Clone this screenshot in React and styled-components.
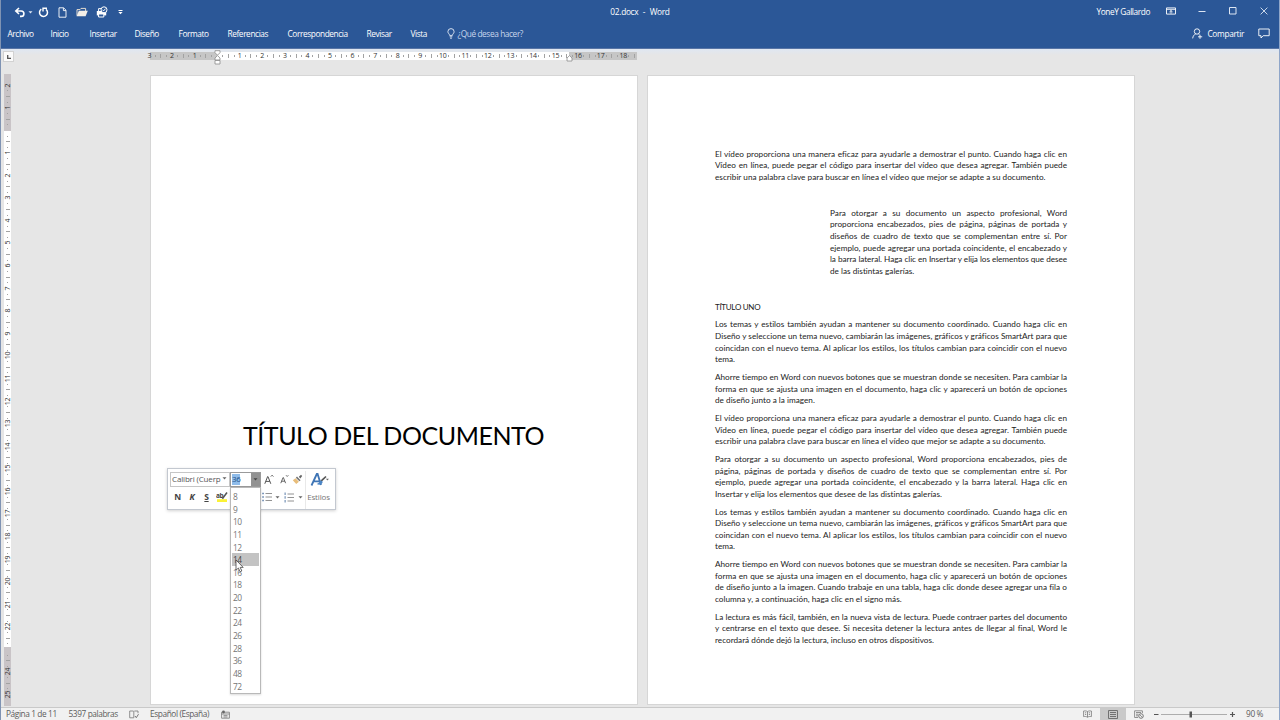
import React from "react";
import styled, { createGlobalStyle, css } from "styled-components";

const GlobalStyle = createGlobalStyle`
  * {
    box-sizing: border-box;
  }
  body {
    margin: 0;
    overflow: hidden;
    background: #e6e6e6;
    font-family: "Open Sans", "Noto Sans", sans-serif;
  }
`;

const Window = styled.div`
  width: 1280px;
  height: 720px;
  display: flex;
  flex-direction: column;
  overflow: hidden;
  border-left: 1px solid #7f93b3;
  border-right: 1px solid #8fa6c9;
  background: #e6e6e6;
  font-size: 8.3px;
  letter-spacing: -0.4px;
`;

/* ---------- header ---------- */

const Header = styled.header`
  height: 49px;
  flex: none;
  display: flex;
  flex-direction: column;
  background: #2b5797;
  border-bottom: 1px solid #5875a6;
  margin: 0 -1px;
  color: #fff;
  font-weight: 500;
`;

const TitleBar = styled.div`
  height: 23px;
  display: grid;
  grid-template-columns: 1fr 70px 1fr;
  align-items: center;
`;

const QuickAccess = styled.div`
  display: flex;
  align-items: center;
  padding: 1px 0 0 14px;
`;

const QuickButton = styled.span`
  width: ${(p) => p.$w}px;
  height: 16px;
  display: flex;
  align-items: center;
  justify-content: center;
`;

const DocTitle = styled.div`
  text-align: center;
  white-space: pre;
  letter-spacing: -0.3px;
  word-spacing: 0.4px;
  line-height: 12px;
`;

const WindowControls = styled.div`
  display: flex;
  align-items: center;
  justify-content: flex-end;
  padding: 0 1px 1px 0;
`;

const UserName = styled.span`
  margin-right: 5px;
`;

const ControlButton = styled.span`
  width: 31px;
  height: 16px;
  display: flex;
  align-items: center;
  justify-content: center;
`;

const MenuBar = styled.nav`
  height: 21px;
  display: flex;
  align-items: center;
  padding: 0 10px 0 7.5px;
`;

const MenuItem = styled.span`
  width: ${(p) => p.$w}px;
  white-space: nowrap;
`;

const TellMe = styled.span`
  display: flex;
  align-items: center;
  gap: 3px;
  color: #c8d6ec;
  font-weight: 400;
`;

const MenuRight = styled.div`
  margin-left: auto;
  display: flex;
  align-items: center;
  gap: 14px;
`;

const ShareButton = styled.span`
  display: flex;
  align-items: center;
  gap: 4px;
  letter-spacing: -0.32px;
`;

/* ---------- rulers ---------- */

const RulerRow = styled.div`
  height: 15px;
  flex: none;
  display: flex;
  align-items: flex-start;
  background: linear-gradient(#dfe7f2, #e6e6e6 6px);
  padding: 2px 0 0 2px;
`;

const TabStop = styled.div`
  width: 11px;
  height: 11px;
  display: flex;
  align-items: center;
  justify-content: center;
  background: #fbfbfb;
  border: 1px solid #d2d2d2;
`;

const HorizontalRuler = styled.div`
  position: relative;
  width: 491px;
  height: 8px;
  margin: 1px 0 0 132.6px;
  display: flex;
  align-items: center;
  background: linear-gradient(
    90deg,
    transparent 3px,
    #c6c6c6 3px 70.5px,
    #fff 70.5px 422.5px,
    #c6c6c6 422.5px 490px,
    transparent 490px
  );
`;

const HStep = styled.span`
  flex: 1 1 0;
  min-width: 0;
  display: flex;
  justify-content: center;
  color: #333;
  font-size: 7px;
  line-height: 8px;
  letter-spacing: -0.2px;
`;

const VerticalRuler = styled.div`
  width: 7px;
  margin-left: 3px;
  height: 632px;
  display: flex;
  flex-direction: column;
  padding-top: 8.5px;
  background: linear-gradient(#c9c4c7 57px, #fff 57px 573px, #c9c4c7 573px);
`;

const VStep = styled.span`
  height: 5.643px;
  flex: none;
  display: flex;
  align-items: center;
  justify-content: center;
  color: #333;
  font-size: 7px;
  line-height: 7px;
`;

const VNumber = styled.span`
  writing-mode: vertical-rl;
  transform: rotate(180deg);
`;

const Tick = styled.i`
  background: #a2a2a2;
  ${(p) =>
    p.$vertical
      ? css`
          width: ${p.$long ? 4 : 1}px;
          height: 1px;
        `
      : css`
          width: 1px;
          height: ${p.$long ? 4 : 2}px;
        `}
`;

/* indent markers sit on top of the ruler scale */
const IndentMarker = styled.svg`
  position: absolute;
  top: ${(p) => p.$top}px;
  left: ${(p) => p.$left}px;
`;

/* ---------- pages ---------- */

const Workspace = styled.main`
  flex: 1;
  min-height: 0;
  display: flex;
  align-items: flex-start;
  padding-top: 10px;
`;

const Pages = styled.div`
  display: flex;
  gap: 9px;
  padding: 1px 0 0 139px;
`;

const Page = styled.section`
  position: relative;
  width: 488px;
  height: 630px;
  background: #fff;
  border: 1px solid #d6d6d6;
  color: #1c1c1c;
  font-family: Lato, "Open Sans", sans-serif;
`;

const CoverTitle = styled.h1`
  margin: 0;
  padding: 342px 0 0 92px;
  font-size: 25px;
  line-height: 34px;
  font-weight: 400;
  letter-spacing: -0.45px;
  color: #000;
  white-space: nowrap;
`;

const TextBody = styled.div`
  padding: 72.6px 67px 0 67px;
  font-size: 8.2px;
  line-height: 11.63px;
  letter-spacing: 0.014px;
`;

const Paragraph = styled.p`
  margin: 0 0 ${(p) => p.$after || 6.1}px;
  padding-left: ${(p) => p.$indent || 0}px;
`;

const Line = styled.span`
  display: block;
  height: 11.63px;
  white-space: nowrap;
  text-align: left;
  text-align-last: ${(p) => (p.$last ? "left" : "justify")};
  letter-spacing: ${(p) => (p.$tight ? "-0.06px" : "inherit")};
`;

const Heading = styled.h2`
  margin: 0 0 6.3px;
  font-size: 8px;
  line-height: 11.63px;
  font-weight: 400;
  letter-spacing: -0.3px;
`;

/* ---------- floating toolbar ---------- */

const MiniToolbar = styled.div`
  position: absolute;
  left: 16px;
  top: 392px;
  width: 169px;
  height: 42px;
  padding: 2px 4px 0 2px;
  display: flex;
  background: #fff;
  border: 1px solid #c3c8d0;
  box-shadow: 0 1px 3px rgba(0, 0, 0, 0.18);
  font-family: "Open Sans", "Noto Sans", sans-serif;
  font-size: 8px;
  color: #555;
`;

const ToolRows = styled.div`
  width: 134px;
  display: flex;
  flex-direction: column;
  gap: 2px;
`;

const ToolRow = styled.div`
  height: 16px;
  display: flex;
  align-items: center;
`;

const FontBox = styled.div`
  width: 60px;
  height: 15px;
  flex: none;
  display: flex;
  align-items: center;
  justify-content: space-between;
  padding: 0 2px 1px 1px;
  border: 1px solid #c6c6c6;
  line-height: 11px;
  white-space: nowrap;
  letter-spacing: -0.16px;
`;

const SizeBox = styled.div`
  width: 31px;
  height: 15px;
  flex: none;
  display: flex;
  align-items: center;
  border: 1px solid #9a9a9a;
  padding-left: 1px;
`;

const SizeValue = styled.span`
  height: 11px;
  line-height: 10px;
  background: #8fbcea;
  color: #1d4f86;
`;

const SizeArrow = styled.span`
  width: 9px;
  height: 100%;
  margin-left: auto;
  display: flex;
  align-items: center;
  justify-content: center;
  background: #929292;
`;

const ToolButton = styled.span`
  width: ${(p) => p.$w || 15}px;
  height: 16px;
  flex: none;
  display: flex;
  align-items: center;
  justify-content: center;
  color: #444;
  font-size: 8.5px;
  line-height: 12px;
  font-weight: ${(p) => (p.$bold ? 700 : 400)};
  font-style: ${(p) => (p.$italic ? "italic" : "normal")};
  text-decoration: ${(p) => (p.$underline ? "underline" : "none")};
`;

const HiddenTools = styled.span`
  width: 30px;
  flex: none;
`;

const StylesButton = styled.div`
  flex: 1;
  display: flex;
  flex-direction: column;
  align-items: center;
  gap: 2px;
  margin-left: 1px;
  border-left: 1px solid #e9e9e9;
  line-height: 12px;
  letter-spacing: -0.15px;
  color: #777;
`;

const SizeMenu = styled.ul`
  position: absolute;
  left: 79px;
  top: 411px;
  width: 31px;
  height: 207px;
  margin: 0;
  padding: 2px 1px;
  list-style: none;
  background: #fff;
  border: 1px solid #b9b9b9;
  box-shadow: 0 1px 2px rgba(0, 0, 0, 0.15);
  font-family: "Open Sans", "Noto Sans", sans-serif;
`;

const SizeOption = styled.li`
  height: 12.65px;
  padding-left: 1px;
  font-size: 8.4px;
  line-height: 13px;
  letter-spacing: -0.45px;
  color: ${(p) => (p.$active ? "#444" : "#757575")};
  background: ${(p) => (p.$active ? "#c3c3c3" : "transparent")};
`;

const Pointer = styled.svg`
  position: absolute;
  left: 84px;
  top: 483px;
`;

/* ---------- status bar ---------- */

const StatusBar = styled.footer`
  height: 13px;
  flex: none;
  display: flex;
  align-items: center;
  padding: 0 16px 0 5px;
  background: #f1f1f1;
  border-top: 1px solid #c9c9c9;
  color: #5c5c5c;
  line-height: 12px;
`;

const StatusItem = styled.span`
  width: ${(p) => p.$w}px;
  flex: none;
  display: flex;
  align-items: center;
  white-space: nowrap;
`;

const ViewButton = styled.span`
  width: 26px;
  height: 12px;
  display: flex;
  align-items: center;
  justify-content: center;
  background: ${(p) => (p.$active ? "#c9c9c9" : "transparent")};
`;

const StatusRight = styled.div`
  margin-left: auto;
  display: flex;
  align-items: center;
`;

const Zoom = styled.div`
  width: 82px;
  margin: 0 10px 0 2px;
  display: flex;
  align-items: center;
`;

const MENU = [
  ["Archivo", 43],
  ["Inicio", 39],
  ["Insertar", 45],
  ["Diseño", 44],
  ["Formato", 49],
  ["Referencias", 60],
  ["Correspondencia", 79],
  ["Revisar", 44],
  ["Vista", 36],
];

const SIZES = [8, 9, 10, 11, 12, 14, 16, 18, 20, 22, 24, 26, 28, 36, 48, 72];

const VIDEO = [
  "El vídeo proporciona una manera eficaz para ayudarle a demostrar el punto. Cuando haga clic en",
  "Vídeo en línea, puede pegar el código para insertar del vídeo que desea agregar. También puede",
  "escribir una palabra clave para buscar en línea el vídeo que mejor se adapte a su documento.",
];

const TEMAS = [
  "Los temas y estilos también ayudan a mantener su documento coordinado. Cuando haga clic en",
  "Diseño y seleccione un tema nuevo, cambiarán las imágenes, gráficos y gráficos SmartArt para que",
  "coincidan con el nuevo tema. Al aplicar los estilos, los títulos cambian para coincidir con el nuevo",
  "tema.",
];

const BLOCKS = [
  { lines: VIDEO, after: 24.4 },
  {
    indent: 115,
    after: 23.9,
    tight: 4,
    lines: [
      "Para otorgar a su documento un aspecto profesional, Word",
      "proporciona encabezados, pies de página, páginas de portada y",
      "diseños de cuadro de texto que se complementan entre sí. Por",
      "ejemplo, puede agregar una portada coincidente, el encabezado y",
      "la barra lateral. Haga clic en Insertar y elija los elementos que desee",
      "de las distintas galerías.",
    ],
  },
  { heading: "TÍTULO UNO" },
  { lines: TEMAS },
  {
    lines: [
      "Ahorre tiempo en Word con nuevos botones que se muestran donde se necesiten. Para cambiar la",
      "forma en que se ajusta una imagen en el documento, haga clic y aparecerá un botón de opciones",
      "de diseño junto a la imagen.",
    ],
  },
  { lines: VIDEO },
  {
    lines: [
      "Para otorgar a su documento un aspecto profesional, Word proporciona encabezados, pies de",
      "página, páginas de portada y diseños de cuadro de texto que se complementan entre sí. Por",
      "ejemplo, puede agregar una portada coincidente, el encabezado y la barra lateral. Haga clic en",
      "Insertar y elija los elementos que desee de las distintas galerías.",
    ],
  },
  { lines: TEMAS },
  {
    lines: [
      "Ahorre tiempo en Word con nuevos botones que se muestran donde se necesiten. Para cambiar la",
      "forma en que se ajusta una imagen en el documento, haga clic y aparecerá un botón de opciones",
      "de diseño junto a la imagen. Cuando trabaje en una tabla, haga clic donde desee agregar una fila o",
      "columna y, a continuación, haga clic en el signo más.",
    ],
  },
  {
    tight: 0,
    lines: [
      "La lectura es más fácil, también, en la nueva vista de lectura. Puede contraer partes del documento",
      "y centrarse en el texto que desee. Si necesita detener la lectura antes de llegar al final, Word le",
      "recordará dónde dejó la lectura, incluso en otros dispositivos.",
    ],
  },
];

// one step is a quarter of a centimetre
function rulerSteps(from, to) {
  const steps = [];
  for (let q = from * 4; q <= to * 4; q++) steps.push(q);
  return steps;
}

function renderStep(q, vertical, hidden = []) {
  const value = Math.abs(q / 4);
  if (q % 4 === 0) {
    if (hidden.includes(value)) return null;
    return vertical ? <VNumber>{value}</VNumber> : value;
  }
  return <Tick $vertical={vertical} $long={q % 2 === 0} />;
}

const Caret = ({ color = "#666" }) => (
  <svg width="5" height="3" viewBox="0 0 5 3">
    <path d="M0.5 0.3h4L2.5 2.6z" fill={color} />
  </svg>
);

function QuickAccessBar() {
  return (
    <QuickAccess>
      <QuickButton $w={12}>
        <svg width="12" height="11" viewBox="0 0 12 11" fill="none" stroke="#fff">
          <path d="M5 1 1.8 4 5 7M2 4h5.2a2.6 2.6 0 0 1 0 5.4H6" strokeWidth="1.6" />
        </svg>
      </QuickButton>
      <QuickButton $w={9}>
        <Caret color="#dfe7f3" />
      </QuickButton>
      <QuickButton $w={17}>
        <svg width="11" height="11" viewBox="0 0 11 11" fill="none" stroke="#fff">
          <path d="M3.3 2.2A4 4 0 1 0 8 2.4" strokeWidth="1.5" />
          <path d="M5 4.6V1.3H9" strokeWidth="1.4" />
        </svg>
      </QuickButton>
      <QuickButton $w={20}>
        <svg width="9" height="11" viewBox="0 0 9 11" fill="none" stroke="#fff">
          <path d="M1 .8h4.6L8 3.2v7H1zM5.4 1v2.6H8" strokeWidth=".9" />
        </svg>
      </QuickButton>
      <QuickButton $w={20}>
        <svg width="12" height="10" viewBox="0 0 12 10">
          <path d="M1 8.6V2.6h3l1-1.2h4.6V4" fill="none" stroke="#e4dcd0" />
          <path d="M2.8 3.8h9L9.6 9.2H.6z" fill="#f3efe8" />
        </svg>
      </QuickButton>
      <QuickButton $w={20}>
        <svg width="12" height="12" viewBox="0 0 12 12">
          <path d="M.8 5h9.4v4.4H.8z" fill="#fff" />
          <path d="M2.6 5V2.6h3M2.6 8h5.2v3H2.6z" fill="#2b5797" stroke="#fff" />
          <circle cx="8" cy="3.8" r="3" fill="#2b5797" stroke="#fff" />
          <path d="M6.5 3.7l1.1 1.2L9.6 2.6" fill="none" stroke="#fff" />
        </svg>
      </QuickButton>
      <QuickButton $w={17}>
        <svg width="5" height="6" viewBox="0 0 5 6" fill="#fff">
          <path d="M.5 1h4v1h-4zM.4 3h4.2L2.5 5.3z" />
        </svg>
      </QuickButton>
    </QuickAccess>
  );
}

function TopBar() {
  return (
    <Header>
      <TitleBar>
        <QuickAccessBar />
        <DocTitle>02.docx  -  Word</DocTitle>
        <WindowControls>
          <UserName>YoneY Gallardo</UserName>
          <ControlButton>
            <svg width="10" height="8" viewBox="0 0 10 8" fill="none" stroke="#fff">
              <path d="M.5.9h9v6.2h-9zM.5 2.3h9M5 6.6V3.6M3.5 4.9 5 3.5l1.5 1.4" strokeWidth=".9" />
            </svg>
          </ControlButton>
          <ControlButton>
            <svg width="8" height="8" viewBox="0 0 8 8" stroke="#dde6f3">
              <path d="M.5 4.5h7" />
            </svg>
          </ControlButton>
          <ControlButton>
            <svg width="8" height="8" viewBox="0 0 8 8" fill="none" stroke="#dde6f3">
              <path d="M.5 .5h6.5v6.5H.5z" />
            </svg>
          </ControlButton>
          <ControlButton>
            <svg width="8" height="8" viewBox="0 0 8 8" stroke="#dde6f3">
              <path d="M.6.6l6.8 6.8M7.4.6.6 7.4" strokeWidth=".9" />
            </svg>
          </ControlButton>
        </WindowControls>
      </TitleBar>
      <MenuBar>
        {MENU.map(([label, w]) => (
          <MenuItem key={label} $w={w}>
            {label}
          </MenuItem>
        ))}
        <TellMe>
          <svg width="8" height="11" viewBox="0 0 8 11" fill="none" stroke="#e8eef8">
            <path
              d="M2.6 7.4C2.6 6 .9 5.4.9 3.7a3.1 3.1 0 0 1 6.2 0c0 1.7-1.7 2.3-1.7 3.7zM2.7 8.8h2.6M3.1 10.2h1.8"
              strokeWidth=".9"
            />
          </svg>
          ¿Qué desea hacer?
        </TellMe>
        <MenuRight>
          <ShareButton>
            <svg width="11" height="11" viewBox="0 0 11 11" fill="none" stroke="#fff">
              <circle cx="5" cy="3.5" r="2.7" strokeWidth=".9" />
              <path d="M.7 10.4C.9 8.2 2 6.7 3.6 6M6.5 6l1 .8M8 6.8v4M6 8.8h4.2" strokeWidth=".9" />
            </svg>
            Compartir
          </ShareButton>
          <svg width="12" height="11" viewBox="0 0 12 11" fill="none" stroke="#fff">
            <path d="M.8 1h10.4v6.7H5.2L3 10V7.7H.8z" strokeWidth=".9" />
          </svg>
        </MenuRight>
      </MenuBar>
    </Header>
  );
}

function TopRuler() {
  return (
    <RulerRow>
      <TabStop>
        <svg width="4" height="4" viewBox="0 0 4 4">
          <path d="M.7 0v3.3H4" fill="none" stroke="#555" strokeWidth="1.3" />
        </svg>
      </TabStop>
      <HorizontalRuler>
        {rulerSteps(-3, 18.5).map((q) => (
          <HStep key={q}>{renderStep(q, false, [0])}</HStep>
        ))}
        <IndentMarker $top={-2} $left={67} width="7" height="15" viewBox="0 0 7 15">
          <path
            d="M1 .7h5v2L3.5 5.2 1 2.7zM3.5 5.6 6 8v2H1V8zM1 10.4h5v3.6H1z"
            fill="#fff"
            stroke="#8a8a8a"
            strokeWidth=".8"
          />
        </IndentMarker>
        <IndentMarker $top={3} $left={419} width="7" height="7" viewBox="0 0 7 7">
          <path d="M3.5 .6 6 3v3H1V3z" fill="#fff" stroke="#8a8a8a" strokeWidth=".8" />
        </IndentMarker>
      </HorizontalRuler>
    </RulerRow>
  );
}

function FormatToolbar() {
  return (
    <MiniToolbar>
      <ToolRows>
        <ToolRow>
          <FontBox>
            Calibri (Cuerp
            <Caret />
          </FontBox>
          <SizeBox>
            <SizeValue>36</SizeValue>
            <SizeArrow>
              <Caret color="#444" />
            </SizeArrow>
          </SizeBox>
          <ToolButton $w={16}>
            <svg width="10" height="11" viewBox="0 0 10 11" fill="none" stroke="#555">
              <path d="M.8 9.8 3.6 2.6h.4l2.8 7.2M1.8 7.4h4" />
              <path d="M6.8 2.6 8.1 1.2l1.3 1.4" strokeWidth=".9" />
            </svg>
          </ToolButton>
          <ToolButton $w={14}>
            <svg width="9" height="10" viewBox="0 0 9 10" fill="none" stroke="#555">
              <path d="M.8 9.2 3 3.6h.4l2.2 5.6M1.6 7.2h3.2" strokeWidth=".9" />
              <path d="M6 1.2l1.2 1.3L8.4 1.2" strokeWidth=".8" />
            </svg>
          </ToolButton>
          <ToolButton $w={13}>
            <svg width="11" height="11" viewBox="0 0 11 11">
              <path d="M6.8 2.8 9 .8l1.2 1.3-1.9 2.3z" fill="#666" />
              <path d="M5 2.6l3.6 3.6-1.2 1.1L3.8 3.8z" fill="#777" />
              <path d="M3.5 4.2l3.4 3.5L4.2 10 .8 6.2z" fill="#e8bd7a" />
            </svg>
          </ToolButton>
        </ToolRow>
        <ToolRow>
          <ToolButton $bold>N</ToolButton>
          <ToolButton $w={14} $bold $italic>
            K
          </ToolButton>
          <ToolButton $bold $underline>
            S
          </ToolButton>
          <ToolButton>
            <svg width="12" height="12" viewBox="0 0 12 12">
              <path d="M1 8.2h10V11H1z" fill="#fbf236" />
              <text x="0" y="6.8" fontSize="6.5" fontWeight="700" fill="#444">
                ab
              </text>
              <path d="M11 1.5 6.4 7.8" stroke="#555" strokeWidth="1.5" />
            </svg>
          </ToolButton>
          <HiddenTools />
          <ToolButton $w={16}>
            <svg width="10" height="10" viewBox="0 0 10 10">
              <path d="M3.5 1.5H10M3.5 5H10M3.5 8.5H10" stroke="#777" strokeWidth=".8" />
              <path d="M.3 .8h1.5v1.5H.3zM.3 4.3h1.5v1.5H.3zM.3 7.8h1.5v1.5H.3z" fill="#5a7ca8" />
            </svg>
          </ToolButton>
          <Caret />
          <ToolButton $w={18}>
            <svg width="10" height="11" viewBox="0 0 10 11">
              <path d="M3.5 2H10M3.5 5.5H10M3.5 9H10" stroke="#777" strokeWidth=".8" />
              <path d="M1.1 .5v2.5M1.1 4.2v2.5M1.1 8v2.5" stroke="#5a7ca8" />
            </svg>
          </ToolButton>
          <Caret />
        </ToolRow>
      </ToolRows>
      <StylesButton>
        <svg width="21" height="18" viewBox="0 0 21 18" fill="none">
          <path d="M3.5 14.5 8.8 3h.8L13 14M5.8 10.3h5.6" stroke="#3f75b5" strokeWidth="1.8" />
          <path d="M18 5.5 13 10.2" stroke="#555" strokeWidth="1.7" />
          <path d="M13.3 9.4c-1.8.6-2.2 3-4.6 3.6 2.6 1.4 5.8.4 6-2.2z" fill="#4d86c6" />
          <path d="M17.9 7.7h3L19.4 9.6z" fill="#666" />
        </svg>
        Estilos
      </StylesButton>
    </MiniToolbar>
  );
}

function FontSizeMenu() {
  return (
    <SizeMenu>
      {SIZES.map((size) => (
        <SizeOption key={size} $active={size === 14}>
          {size}
        </SizeOption>
      ))}
    </SizeMenu>
  );
}

function DocumentText() {
  return (
    <TextBody>
      {BLOCKS.map((block, i) =>
        block.heading ? (
          <Heading key={i}>{block.heading}</Heading>
        ) : (
          <Paragraph key={i} $after={block.after} $indent={block.indent}>
            {block.lines.map((line, n) => (
              <Line key={n} $last={n === block.lines.length - 1} $tight={n === block.tight}>
                {line}
              </Line>
            ))}
          </Paragraph>
        )
      )}
    </TextBody>
  );
}

function Status() {
  return (
    <StatusBar>
      <StatusItem $w={62.5}>Página 1 de 11</StatusItem>
      <StatusItem $w={60}>5397 palabras</StatusItem>
      <StatusItem $w={21.5}>
        <svg width="10" height="9" viewBox="0 0 10 9" fill="none" stroke="#777">
          <path d="M4.8 7.8H.7V1h3.5l.6.6.6-.6H9v2.2M4.8 1.8v6" strokeWidth=".8" />
          <path d="M6 6l1.3 1.7L9.5 4.2" strokeWidth="1" />
        </svg>
      </StatusItem>
      <StatusItem $w={70.5}>Español (España)</StatusItem>
      <StatusItem $w={12}>
        <svg width="9" height="9" viewBox="0 0 9 9" fill="none" stroke="#777">
          <path d="M.6 2.2h7.8v6H.6zM.6 4h7.8M2.5 5.6h4M2.5 7h4" strokeWidth=".8" />
          <circle cx="2.5" cy="2" r="1.4" fill="#666" stroke="none" />
        </svg>
      </StatusItem>
      <StatusRight>
        <ViewButton>
          <svg width="9" height="8" viewBox="0 0 9 8" fill="none" stroke="#777">
            <path
              d="M4.5 1.6C3.3.8 2 .8.6 1v5.6c1.4-.2 2.7-.2 3.9.6 1.2-.8 2.5-.8 3.9-.6V1c-1.4-.2-2.7-.2-3.9.6zm0 0v5.6M2 2.8h1.2M2 4.5h1.2M5.8 2.8H7M5.8 4.5H7"
              strokeWidth=".8"
            />
          </svg>
        </ViewButton>
        <ViewButton $active>
          <svg width="10" height="9" viewBox="0 0 10 9" fill="none" stroke="#666">
            <path d="M.5 .5h9v8h-9zM2 2.5h6M2 4.5h6M2 6.5h6" strokeWidth=".9" />
          </svg>
        </ViewButton>
        <ViewButton>
          <svg width="10" height="9" viewBox="0 0 10 9" fill="none" stroke="#777">
            <path d="M4 7.5H.6V.8h7.8V3M2 2.5h5M2 4.2h2.5M2 5.8h2" strokeWidth=".8" />
            <circle cx="7" cy="6" r="2.3" />
            <path d="M5.5 4.5l3 3" strokeWidth=".8" />
          </svg>
        </ViewButton>
        <Zoom>
          <svg width="82" height="9" viewBox="0 0 82 9">
            <path d="M0 4.5h4.500M76 4.500h5M78.500 2v5" stroke="#555" strokeWidth="1.2" />
            <path d="M7 4.5h66" stroke="#a5a5a5" strokeWidth=".9" />
            <path d="M35.5 1.5h2.5v6h-2.500z" fill="#555" />
          </svg>
        </Zoom>
        90 %
      </StatusRight>
    </StatusBar>
  );
}

export default function App() {
  return (
    <>
      <GlobalStyle />
      <Window>
        <TopBar />
        <TopRuler />
        <Workspace>
          <VerticalRuler>
            {rulerSteps(-2, 25).map((q) => (
              <VStep key={q}>{renderStep(q, true, [0, 23])}</VStep>
            ))}
          </VerticalRuler>
          <Pages>
            <Page>
              <CoverTitle>TÍTULO DEL DOCUMENTO</CoverTitle>
              <FormatToolbar />
              <FontSizeMenu />
              <Pointer width="9" height="14" viewBox="0 0 9 14">
                <path
                  d="M1 1v10.2l2.4-2.2 1.6 3.8 1.8-.8-1.6-3.6h3z"
                  fill="#fff"
                  stroke="#444"
                  strokeWidth=".8"
                />
              </Pointer>
            </Page>
            <Page>
              <DocumentText />
            </Page>
          </Pages>
        </Workspace>
        <Status />
      </Window>
    </>
  );
}
